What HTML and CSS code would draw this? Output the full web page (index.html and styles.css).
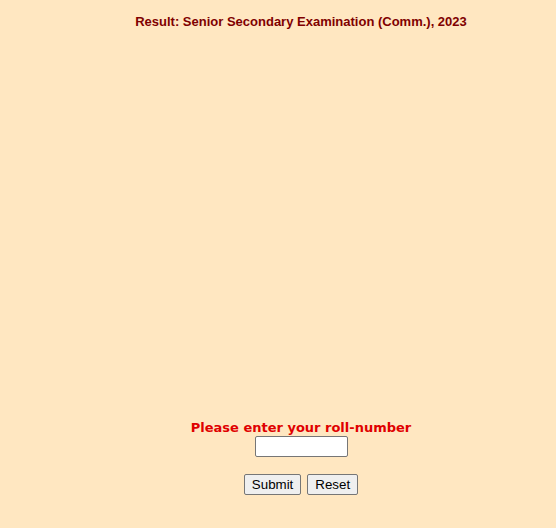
FILE: index.html
```html
<!DOCTYPE html>
<html>
<head>
<meta charset="utf-8">
<link rel="stylesheet" href="styles.css">
</head>
<body>
<div class="page">
  <h1 class="title">Result: Senior Secondary Examination (Comm.), 2023</h1>
  <div class="spacer"></div>
  <form class="form">
    <div class="prompt">Please enter your roll-number</div>
    <input class="roll" type="text">
    <div class="buttons">
      <button type="button" class="btn">Submit</button>
      <button type="reset" class="btn">Reset</button>
    </div>
  </form>
</div>
</body>
</html>
```
FILE: styles.css
```css
html, body {
  margin: 0;
  padding: 0;
  background: #FFE7C1;
}
.page {
  padding-left: 46px;
  display: flex;
  flex-direction: column;
  align-items: center;
}
.title {
  margin: 14px 0 0 0;
  font-family: "Liberation Sans", Arial, sans-serif;
  font-size: 13px;
  font-weight: bold;
  color: #800000;
  line-height: 16px;
}
.spacer {
  height: 390px;
}
.form {
  display: flex;
  flex-direction: column;
  align-items: center;
  margin: 0;
}
.prompt {
  font-family: "DejaVu Sans", Verdana, sans-serif;
  font-size: 13px;
  font-weight: bold;
  color: #E00000;
  line-height: 16px;
}
.roll {
  box-sizing: border-box;
  width: 93px;
  height: 21px;
  margin: 0;
  border: 1px solid #767676;
  border-radius: 2px;
  background: #fff;
  padding: 1px 2px;
}
.buttons {
  display: flex;
  gap: 6px;
  margin-top: 17px;
}
.btn {
  box-sizing: border-box;
  height: 21px;
  margin: 0;
  padding: 1px 7px;
  font-family: "Liberation Sans", Arial, sans-serif;
  font-size: 13.33px;
  color: #000;
  background: #EFEFEF;
  border: 1px solid #767676;
  border-radius: 2px;
}
```
